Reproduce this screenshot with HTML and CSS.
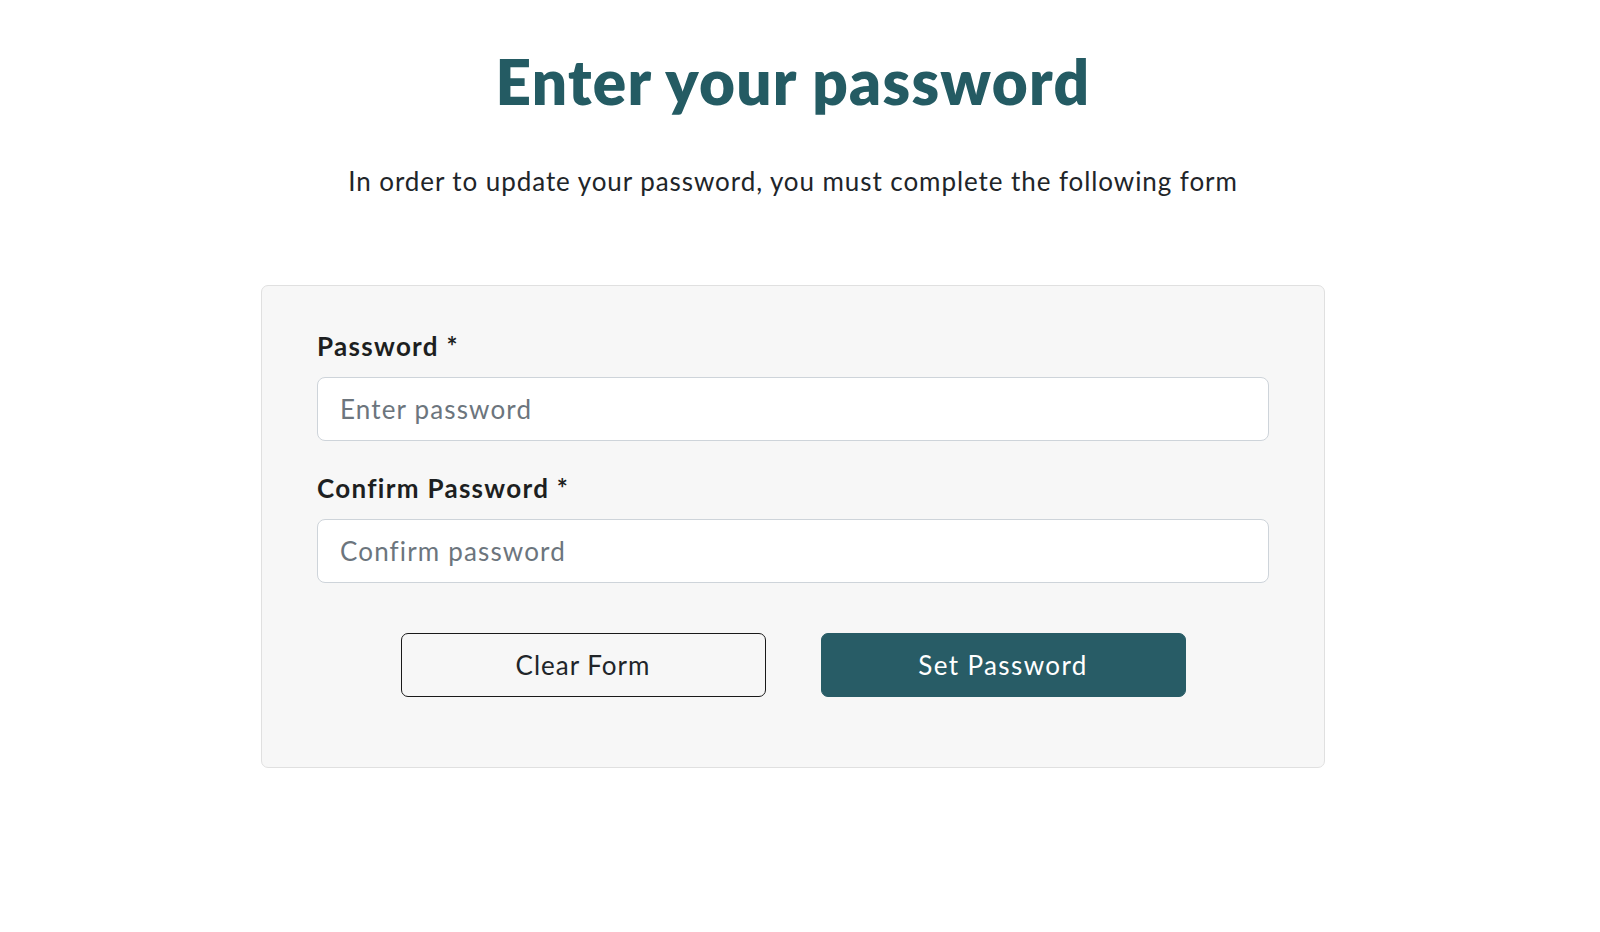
FILE: index.html
```html
<!DOCTYPE html>
<html lang="en">
<head>
<meta charset="utf-8">
<title>Enter your password</title>
<link rel="stylesheet" href="styles.css">
</head>
<body>
<main class="page">
  <h1 class="title">Enter your password</h1>
  <p class="subtitle">In order to update your password, you must complete the following form</p>
  <form class="card">
    <label class="label" for="pw">Password *</label>
    <input class="input" id="pw" type="password" placeholder="Enter password">
    <label class="label label-second" for="pw2">Confirm Password *</label>
    <input class="input" id="pw2" type="password" placeholder="Confirm password">
    <div class="actions">
      <button type="reset" class="btn btn-outline">Clear Form</button>
      <button type="submit" class="btn btn-primary">Set Password</button>
    </div>
  </form>
</main>
</body>
</html>
```

FILE: styles.css
```css
* { box-sizing: border-box; }
html, body { margin: 0; padding: 0; background: #ffffff; }
body {
  font-family: "Lato", "Noto Sans", "DejaVu Sans", sans-serif;
  color: #212529;
}
.page {
  width: 1586px;
  display: flex;
  flex-direction: column;
  align-items: center;
}
.title {
  margin: 44px 0 0;
  font-size: 62px;
  line-height: 74px;
  font-weight: 800;
  letter-spacing: 1.3px;
  color: #245b63;
}
.subtitle {
  margin: 44px 0 0;
  font-size: 26px;
  line-height: 39px;
  letter-spacing: 0.93px;
  color: #212529;
}
.card {
  margin-top: 84px;
  width: 1064px;
  background: #f7f7f7;
  border: 1px solid #e0e0e0;
  border-radius: 7px;
  padding: 41px 55px 70px;
  display: flex;
  flex-direction: column;
}
.label {
  font-size: 26px;
  line-height: 39px;
  font-weight: 700;
  letter-spacing: 1.3px;
  color: #1d1f21;
}
.label-second { margin-top: 28px; }
.input {
  margin-top: 11px;
  height: 64px;
  width: 100%;
  border: 1px solid #ced4da;
  border-radius: 8px;
  background: #ffffff;
  padding: 0 22px;
  font-family: inherit;
  font-size: 26px;
  letter-spacing: 1.15px;
  color: #212529;
}
.input::placeholder { color: #6c757d; opacity: 1; }
.actions {
  margin-top: 50px;
  display: flex;
  justify-content: center;
  gap: 55px;
}
.btn {
  width: 365px;
  height: 64px;
  border-radius: 7px;
  font-family: inherit;
  font-size: 26px;
  cursor: pointer;
}
.btn-outline {
  background: transparent;
  border: 1px solid #1a1a1a;
  color: #212529;
  letter-spacing: 1px;
}
.btn-primary {
  background: #285c66;
  border: 1px solid #285c66;
  color: #ffffff;
  letter-spacing: 1.4px;
}
```
